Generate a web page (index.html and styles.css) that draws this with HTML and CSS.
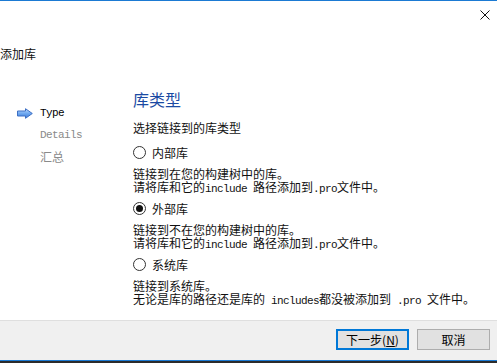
FILE: index.html
```html
<!DOCTYPE html>
<html>
<head>
<meta charset="utf-8">
<link rel="stylesheet" href="styles.css">
</head>
<body>
<div class="window">
  <div class="topline"></div>
  <div class="titlebar">
    <svg class="close" width="10" height="10" viewBox="0 0 10 10"><path d="M0.5 0.5 L9.5 9.5 M9.5 0.5 L0.5 9.5" stroke="#111" stroke-width="1" fill="none"/></svg>
  </div>
  <div class="header">添加库</div>
  <div class="content">
    <nav class="nav">
      <div class="nav-item active">
        <svg class="arrow" width="16" height="11" viewBox="0 0 16 11">
          <defs>
            <linearGradient id="ag" x1="0" y1="0" x2="0" y2="1">
              <stop offset="0" stop-color="#bcdaff"/>
              <stop offset="0.5" stop-color="#6fa8ef"/>
              <stop offset="1" stop-color="#3c7ad8"/>
            </linearGradient>
          </defs>
          <path d="M0.5 3 H8.5 V0.7 L15.3 5.5 L8.5 10.3 V8 H0.5 Z" fill="url(#ag)" stroke="#3d6fc4" stroke-width="1" stroke-linejoin="round"/>
        </svg>
        <span class="mono nav-mono">Type</span>
      </div>
      <div class="nav-item"><span class="mono nav-mono">Details</span></div>
      <div class="nav-item">汇总</div>
    </nav>
    <main class="main">
      <h1 class="title">库类型</h1>
      <p class="prompt">选择链接到的库类型</p>
      <div class="radio"><span class="dot"></span>内部库</div>
      <p class="desc">链接到在您的构建树中的库。<br>请将库和它的<span class="mono">include </span>路径添加到<span class="mono">.pro</span>文件中。</p>
      <div class="radio"><span class="dot checked"></span>外部库</div>
      <p class="desc">链接到不在您的构建树中的库。<br>请将库和它的<span class="mono">include </span>路径添加到<span class="mono">.pro</span>文件中。</p>
      <div class="radio"><span class="dot"></span>系统库</div>
      <p class="desc">链接到系统库。<br>无论是库的路径还是库的<span class="mono"> includes</span>都没被添加到<span class="mono"> .pro </span>文件中。</p>
    </main>
  </div>
  <footer class="footer">
    <button class="btn primary">下一步(<span class="ul">N</span>)</button>
    <button class="btn">取消</button>
  </footer>
  <div class="taskline"></div>
</div>
</body>
</html>
```

FILE: styles.css
```css
html, body {
  margin: 0;
  padding: 0;
  background: #ffffff;
}
body {
  font-family: "Noto Sans CJK SC", "Noto Sans", sans-serif;
  font-size: 12px;
  color: #000;
}
.window {
  width: 497px;
  height: 363px;
  display: flex;
  flex-direction: column;
  overflow: hidden;
}
.topline {
  height: 1px;
  background: #1b7ad3;
}
.titlebar {
  height: 29px;
  display: flex;
  justify-content: flex-end;
  align-items: flex-start;
  padding-right: 7px;
  box-sizing: border-box;
  padding-top: 9px;
}
.close {
  display: block;
}
.header {
  margin-top: 18px;
  height: 12px;
  line-height: 12px;
  font-size: 12px;
  padding-left: 0;
  color: #111;
}
.content {
  display: flex;
  flex: 1;
}
.nav {
  width: 133px;
  padding-top: 42px;
  box-sizing: border-box;
}
.nav-item {
  height: 22px;
  line-height: 22px;
  padding-left: 40px;
  position: relative;
  color: #8a8a8a;
  display: flex;
  align-items: center;
}
.nav-item.active {
  color: #000;
  padding-left: 17px;
}
.arrow {
  margin-right: 7px;
  display: block;
}
.mono {
  font-family: "Liberation Mono", "DejaVu Sans Mono", monospace;
  font-size: 11px;
  letter-spacing: -0.6px;
}
.nav-mono {
  font-size: 11px;
}
.main {
  padding-top: 29px;
  flex: 1;
}
.title {
  margin: 0;
  font-size: 16px;
  line-height: 20px;
  height: 20px;
  font-weight: normal;
  color: #1a4aa3;
}
.prompt {
  margin: 13px 0 0;
  line-height: 12px;
  color: #111;
}
.radio {
  height: 16px;
  display: flex;
  align-items: center;
  color: #111;
}
.prompt + .radio {
  margin-top: 10px;
}
.dot {
  width: 11px;
  height: 11px;
  border: 1px solid #333;
  border-radius: 50%;
  background: #fff;
  margin-right: 6px;
  position: relative;
  box-sizing: content-box;
}
.dot.checked::after {
  content: "";
  position: absolute;
  left: 2px;
  top: 2px;
  width: 7px;
  height: 7px;
  border-radius: 50%;
  background: #111;
}
.desc {
  margin: 7px 0 4px;
  line-height: 13px;
  color: #111;
  white-space: nowrap;
}
.footer {
  height: 40px;
  border-top: 1px solid #dfdfdf;
  background: #f0f0f0;
  display: flex;
  justify-content: flex-end;
  align-items: flex-start;
  gap: 8px;
  padding: 8px 7px 0 0;
  box-sizing: border-box;
}
.btn {
  width: 73px;
  height: 21px;
  border: 1px solid #adadad;
  background: #e1e1e1;
  font-family: "Noto Sans CJK SC", sans-serif;
  font-size: 12px;
  color: #000;
  padding: 0;
  line-height: 17px;
  box-sizing: border-box;
}
.btn.primary {
  border: 2px solid #0078d7;
}
.ul {
  text-decoration: underline;
}
.taskline {
  height: 3px;
  border-top: 1px solid #1b7ad3;
  background: #2b2b2b;
  box-sizing: border-box;
}
```
